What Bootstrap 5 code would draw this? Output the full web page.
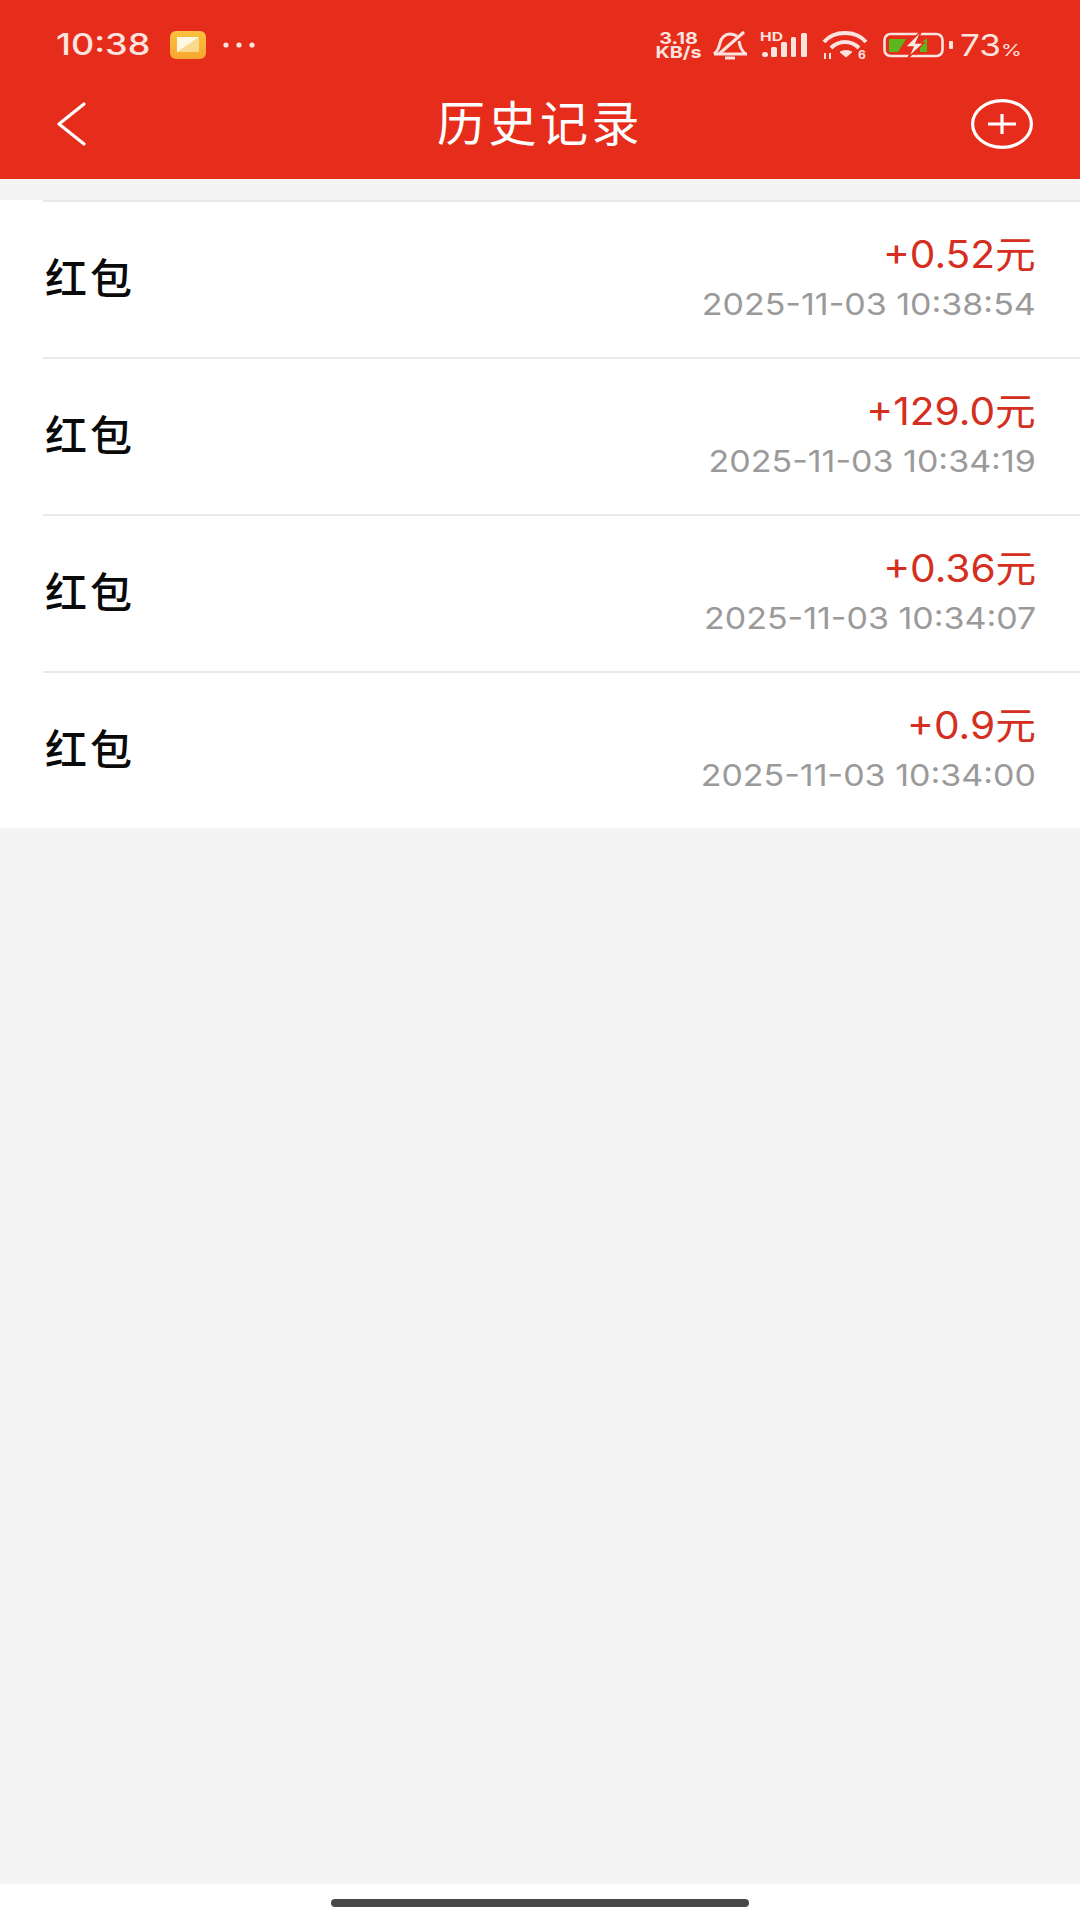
<!DOCTYPE html>
<html lang="zh">
<head>
<meta charset="utf-8">
<title>历史记录</title>
<link rel="stylesheet" href="https://cdn.jsdelivr.net/npm/bootstrap@5.3.0/dist/css/bootstrap.min.css">
<style>
html, body { width: 1080px; height: 1920px; overflow: hidden; }
body { background: #f4f4f4; font-family: Inter, "Noto Sans CJK SC", sans-serif; }
.app-top { background: #e62d1b; height: 179px; color: #fff; position: relative; }
.stat-bar { height: 90px; padding: 0 62px 0 56px; color: #fbe3df; }
.stat-time { width: 114px; flex: none; }
.stat-time span { display: inline-block; font-size: 30px; font-weight: 500; line-height: 1; transform: scaleX(1.2); transform-origin: left center; }
.stat-icon { flex: none; margin-right: 17px; }
.stat-right { margin-left: auto; }
.net-speed { width: 47px; margin-right: 11px; font-size: 16.5px; font-weight: 700; line-height: 14px; text-align: center; transform: scaleX(1.2); }
.bell-icon { margin-right: 12px; }
.signal-icon { margin-right: 13px; overflow: visible; }
.wifi-icon { margin-right: 15px; overflow: visible; }
.batt-icon { margin-right: 7px; }
.batt-num { width: 58px; white-space: nowrap; font-size: 30px; line-height: 1; }
.batt-num span { display: inline-block; transform: scaleX(1.17); transform-origin: left center; }
.batt-pct { font-size: 15.5px; margin-left: 0; }
.title-bar { height: 68px; padding: 0 47px 0 57px; }
.title-text { font-size: 48px; letter-spacing: 3.5px; font-weight: 400; line-height: 1; position: absolute; left: 0; right: 0; text-align: center; }
.rec-list { margin-top: 21px; background: #fff; }
.rec-row { height: 157px; margin-left: 43px; border-top: 2px solid #e9e9e9; padding: 0 44px 0 2px; }
.rec-name { font-size: 42px; color: #0a0a0a; letter-spacing: 3px; line-height: 1; font-weight: 500; margin-top: -2px; }
.rec-amt { font-size: 38px; color: #d42f21; line-height: 1; margin-bottom: 16px; margin-top: -6px; transform: scaleX(1.07); transform-origin: right center; }
.rec-date { font-size: 30px; color: #9a9a9a; line-height: 1; transform: scaleX(1.133); transform-origin: right center; }
.foot-bar { position: absolute; left: 0; right: 0; top: 1884px; height: 36px; background: #fff; }
.foot-pill { width: 418px; height: 8px; background: #484848; border-radius: 4px; margin: 15px auto 0; }
</style>
</head>
<body>
<div class="app-top">
  <div class="stat-bar d-flex align-items-center">
    <div class="stat-time"><span>10:38</span></div>
    <svg class="stat-icon" width="36" height="28" viewBox="0 0 36 28"><defs><linearGradient id="g" x1="0" y1="0" x2="0" y2="1"><stop offset="0" stop-color="#fbc23f"/><stop offset="1" stop-color="#f7a52e"/></linearGradient></defs><rect width="36" height="28" rx="6" fill="url(#g)"/><path d="M7 6h22v15H7z" fill="#fbd98c"/><path d="M7 6h22L7 21z" fill="#fff8e4"/></svg>
    <svg width="32" height="8" viewBox="0 0 32 8"><circle cx="3" cy="4" r="2.6" fill="#fbe3df"/><circle cx="16" cy="4" r="2.6" fill="#fbe3df"/><circle cx="29" cy="4" r="2.6" fill="#fbe3df"/></svg>
    <div class="stat-right d-flex align-items-center">
      <div class="net-speed">3.18<br>KB/s</div>
      <svg class="bell-icon" width="34" height="30" viewBox="0 0 34 30" fill="none" stroke="#fbe3df" stroke-width="3"><path d="M1 24c4-3 5-6 6-11 1-5 5-9 10-9 3 0 5 1 7 2"/><path d="M26 11c1 5 2 10 7 13H1"/><path d="M12 28h10"/><path d="M6 24 31 2"/></svg>
      <svg class="signal-icon" width="50" height="28" viewBox="0 0 50 28" fill="#fbe3df"><text x="1" y="10" font-size="11.5" font-weight="700" font-family="Inter" textLength="23" lengthAdjust="spacingAndGlyphs">HD</text><rect x="3" y="21" width="6" height="5" rx="2.5"/><rect x="12" y="16" width="6" height="10" rx="1.5"/><rect x="22" y="11" width="6" height="15" rx="1.5"/><rect x="32" y="6" width="5" height="20" rx="1.5"/><rect x="42" y="2" width="6" height="24" rx="1.5"/></svg>
      <svg class="wifi-icon" width="46" height="28" viewBox="0 0 46 28" fill="none" stroke="#fbe3df"><path d="M2 11C12 -1 34 -1 44 11" stroke-width="4"/><path d="M9 17c8-8 20-8 28 0" stroke-width="4"/><path d="M18 21c4-2 8-2 12 0l-6 5z" fill="#fbe3df" stroke-width="1"/><text x="36" y="28" font-size="12" font-weight="700" font-family="Inter" fill="#fbe3df" stroke="none">6</text><path d="M3 28v-6M8 28v-6" stroke-width="2"/></svg>
      <svg class="batt-icon" width="70" height="26" viewBox="0 0 70 26" fill="none"><rect x="1.5" y="2" width="58" height="22" rx="6" stroke="#fbe3df" stroke-width="2.6"/><path d="M6 7h17L15 20H6z" fill="#5cb71c"/><path d="M37 12l7-6v14h-7z" fill="#5cb71c"/><path d="M37 0 22 15h8l-5 11 16-15h-8l5-11z" fill="#fdeee9" stroke="#e62d1b" stroke-width="1.5"/><rect x="66" y="9" width="4" height="8" rx="1" fill="#fbe3df"/></svg>
      <div class="batt-num"><span>73<span class="batt-pct">%</span></span></div>
    </div>
  </div>
  <div class="title-bar d-flex align-items-center justify-content-between">
    <svg width="30" height="44" viewBox="0 0 30 44" fill="none" stroke="#fff" stroke-width="3.2" stroke-linecap="round" stroke-linejoin="round"><path d="M27 2 2 22l25 20"/></svg>
    <span class="title-text">历史记录</span>
    <svg width="62" height="50" viewBox="0 0 62 50" fill="none" stroke="#fff" stroke-width="3.2"><ellipse cx="31" cy="25" rx="29.4" ry="23.4"/><path d="M17 25h28M31 15v20"/></svg>
  </div>
</div>
<div class="rec-list">
  <div class="rec-row d-flex align-items-center justify-content-between">
    <span class="rec-name">红包</span>
    <div class="text-end"><div class="rec-amt">+0.52元</div><div class="rec-date">2025-11-03 10:38:54</div></div>
  </div>
  <div class="rec-row d-flex align-items-center justify-content-between">
    <span class="rec-name">红包</span>
    <div class="text-end"><div class="rec-amt">+129.0元</div><div class="rec-date">2025-11-03 10:34:19</div></div>
  </div>
  <div class="rec-row d-flex align-items-center justify-content-between">
    <span class="rec-name">红包</span>
    <div class="text-end"><div class="rec-amt">+0.36元</div><div class="rec-date">2025-11-03 10:34:07</div></div>
  </div>
  <div class="rec-row d-flex align-items-center justify-content-between">
    <span class="rec-name">红包</span>
    <div class="text-end"><div class="rec-amt">+0.9元</div><div class="rec-date">2025-11-03 10:34:00</div></div>
  </div>
</div>
<div class="foot-bar"><div class="foot-pill"></div></div>
<script src="https://cdn.jsdelivr.net/npm/bootstrap@5.3.0/dist/js/bootstrap.bundle.min.js"></script>
</body>
</html>
